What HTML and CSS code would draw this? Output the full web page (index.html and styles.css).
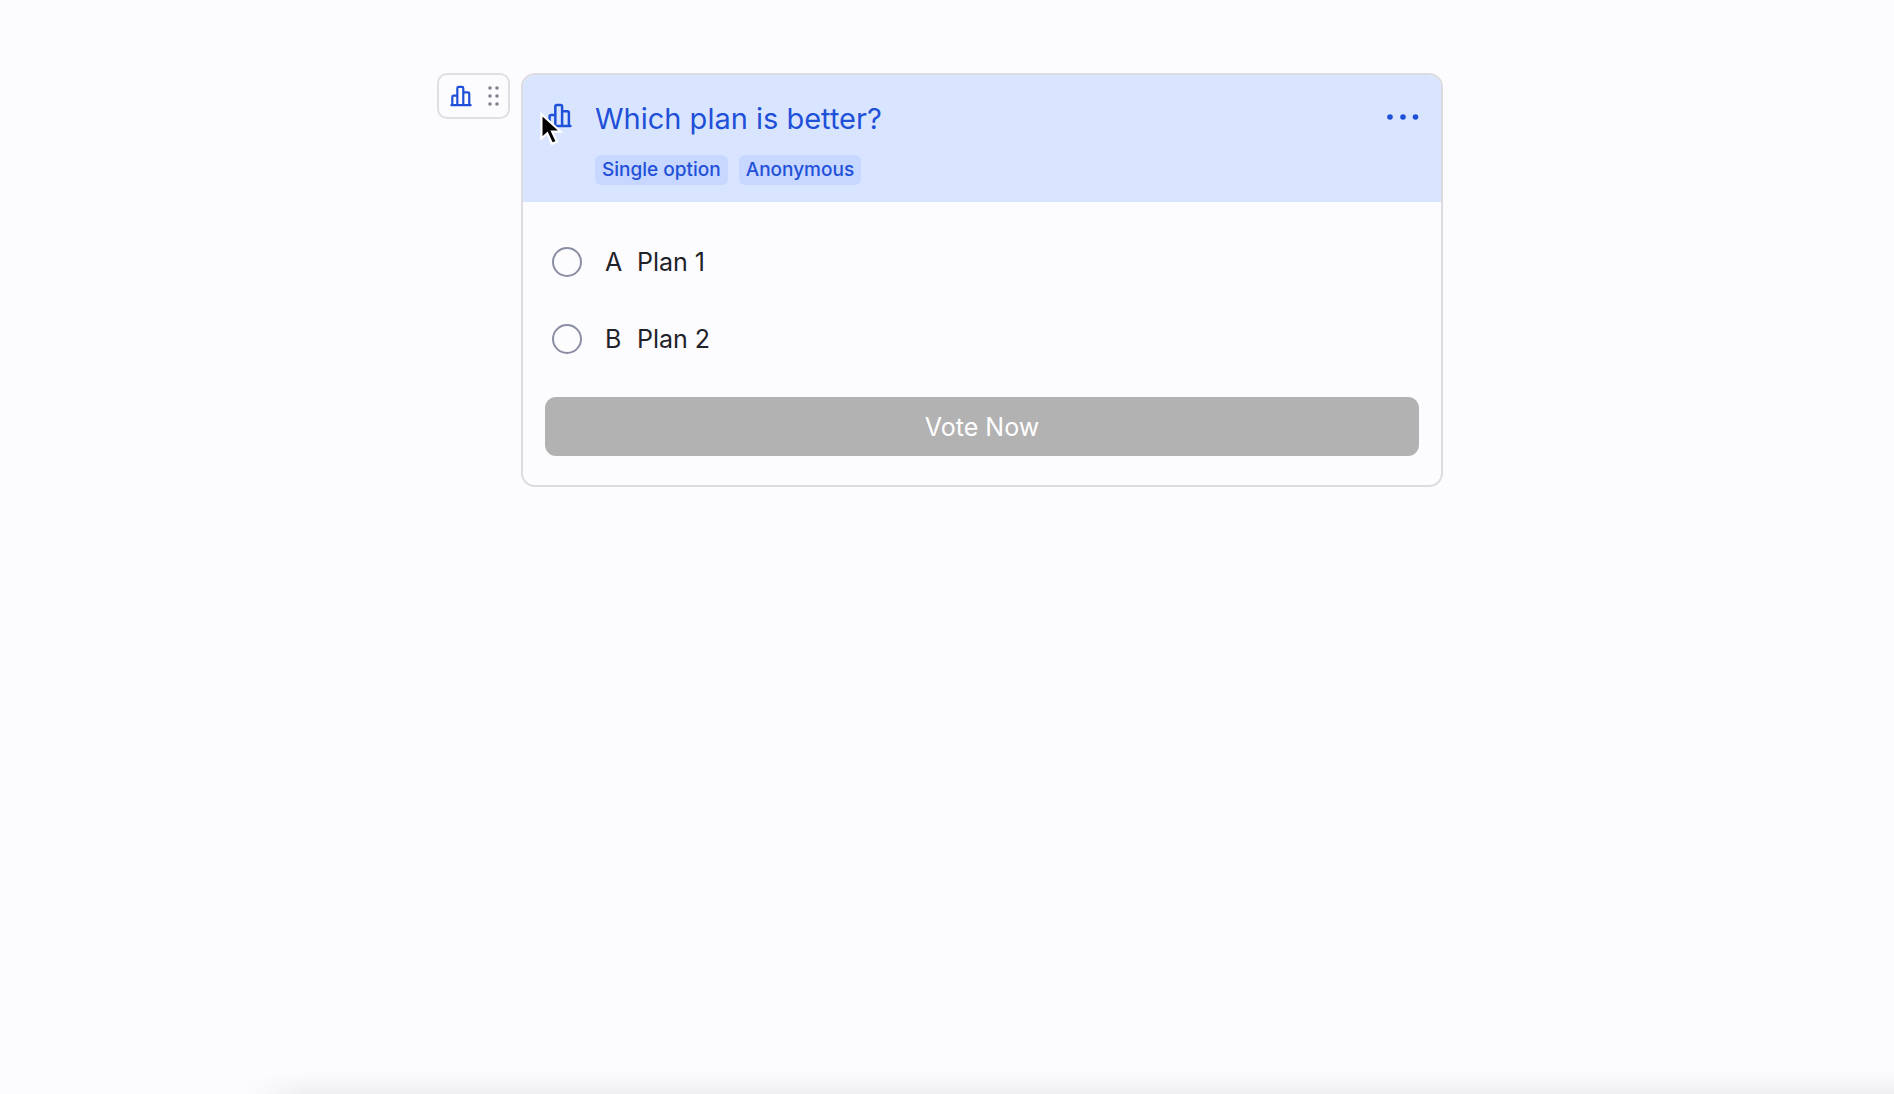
FILE: index.html
```html
<!DOCTYPE html>
<html lang="en">
<head>
<meta charset="utf-8">
<meta name="viewport" content="width=device-width, initial-scale=1">
<title>Poll</title>
<link rel="stylesheet" href="styles.css">
</head>
<body>
<svg class="sprite" aria-hidden="true">
  <symbol id="poll-icon" viewBox="0 0 24 24">
    <path d="M1.500 22H22.500M2.500 22V13Q2.500 11.500 4 11.500H8M8 22V3.500Q8 2 9.500 2H13Q14.500 2 14.500 3.500V22M14.500 8H19.500Q21 8 21 9.500V22" fill="none" stroke="currentColor" stroke-width="2.400" stroke-linejoin="round" stroke-linecap="round"/>
  </symbol>
</svg>
<main class="page">
  <div class="block-tools">
    <button class="tool" type="button" aria-label="Poll block"><svg class="tool-icon"><use href="#poll-icon"/></svg></button>
    <button class="tool" type="button" aria-label="Drag block">
      <svg class="drag-icon" viewBox="0 0 12 20" fill="currentColor"><circle cx="2" cy="2" r="1.800"/><circle cx="9" cy="2" r="1.800"/><circle cx="2" cy="10" r="1.800"/><circle cx="9" cy="10" r="1.800"/><circle cx="2" cy="18" r="1.800"/><circle cx="9" cy="18" r="1.800"/></svg>
    </button>
  </div>
  <form class="poll">
    <header class="poll-header">
      <div class="poll-mark">
        <svg class="poll-icon"><use href="#poll-icon"/></svg>
        <svg class="cursor" viewBox="0 0 22 34"><path d="M2 2V25L7.500 20L12 30L16.500 28L12 18.500H20Z" fill="#000" stroke="#fff" stroke-width="2"/></svg>
      </div>
      <div class="poll-heading">
        <h1 class="poll-title">Which plan is better?</h1>
        <div class="tags"><span class="tag">Single option</span><span class="tag">Anonymous</span></div>
      </div>
      <button class="more" type="button" aria-label="More options"><svg class="more-icon" viewBox="0 0 32 6" fill="currentColor"><circle cx="3" cy="3" r="2.800"/><circle cx="16" cy="3" r="2.800"/><circle cx="28.500" cy="3" r="2.800"/></svg></button>
    </header>
    <div class="poll-body">
      <label class="option"><input class="radio" type="radio" name="plan"><span class="letter">A</span><span>Plan 1</span></label>
      <label class="option"><input class="radio" type="radio" name="plan"><span class="letter">B</span><span>Plan 2</span></label>
      <button class="vote" type="submit" disabled>Vote Now</button>
    </div>
  </form>
</main>
</body>
</html>
```

FILE: styles.css
```css
* { box-sizing: border-box; }
body {
  margin: 0;
  min-height: 100vh;
  background:
    linear-gradient(to right, #fcfcff 240px, transparent 310px),
    linear-gradient(to top, #efeff1, #fcfcff 22px);
  background-color: #fcfcff;
  color: #1f2329;
  font-family: Inter, "Liberation Sans", sans-serif;
}
button { border: 0; padding: 0; background: none; font: inherit; color: inherit; }
.sprite { position: absolute; width: 0; height: 0; }
.page {
  display: flex;
  align-items: flex-start;
  gap: 11px;
  padding: 73px 451px 24px 437px;
}
.block-tools {
  display: flex;
  align-items: center;
  gap: 16px;
  height: 46px;
  padding: 0 8px 0 11px;
  border: 2px solid #dfdfe1;
  border-radius: 10px;
}
.tool { display: flex; color: #1f50d8; }
.tool-icon { width: 22px; height: 22px; }
.drag-icon { width: 12px; height: 20px; color: #80838f; }
.poll {
  flex: 1;
  border: 2px solid #dcdce0;
  border-radius: 14px;
  overflow: hidden;
}
.poll-header {
  display: flex;
  align-items: flex-start;
  min-height: 127px;
  padding: 24px 22px 16px 24px;
  background: #d9e5ff;
  color: #1f50d8;
}
.poll-mark { position: relative; width: 48px; padding-top: 4px; }
.poll-icon { display: block; width: 25px; height: 25px; }
.cursor { position: absolute; left: -8px; top: 13px; width: 24px; height: 36px; }
.poll-heading { flex: 1; }
.poll-title { margin: 0 0 16px; font-size: 29px; line-height: 40px; font-weight: 400; }
.tags { display: flex; gap: 11px; }
.tag {
  padding: 0 7px;
  border-radius: 6px;
  background: #c7d7ff;
  font-size: 19px;
  line-height: 30px;
  font-weight: 500;
}
.more { display: flex; padding: 15px 0; }
.more-icon { width: 32px; height: 6px; }
.poll-body { padding: 21px 22px 29px; }
.option {
  display: flex;
  align-items: center;
  height: 77px;
  padding: 0 7px;
  font-size: 25px;
}
.radio {
  appearance: none;
  width: 30px;
  height: 30px;
  margin: 0 23px 0 0;
  border: 2px solid #8b8ea2;
  border-radius: 50%;
}
.letter { width: 32px; }
.vote {
  display: block;
  width: 100%;
  height: 59px;
  margin-top: 20px;
  border-radius: 11px;
  background: #b2b2b2;
  color: #fff;
  font-size: 25px;
}
```
